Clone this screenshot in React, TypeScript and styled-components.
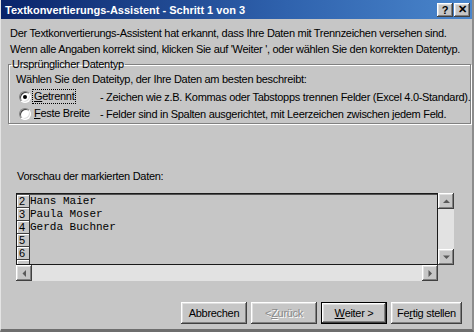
import React from "react";
import styled, { createGlobalStyle } from "styled-components";

const GlobalStyle = createGlobalStyle`
  html, body {
    margin: 0;
    padding: 0;
    background: #c6c6c6;
  }
  body {
    width: 474px;
    height: 332px;
    overflow: hidden;
    font-family: "Liberation Sans", Arial, sans-serif;
    font-size: 11px;
    letter-spacing: -0.3px;
    white-space: nowrap;
    color: #000;
  }
`;

const bevelOut = `
  box-shadow: inset -1px -1px 0 #404040, inset 1px 1px 0 #ffffff,
    inset -2px -2px 0 #808080, inset 2px 2px 0 #dfdfdf;
`;

const Window = styled.div`
  box-sizing: border-box;
  width: 474px;
  height: 332px;
  display: flex;
  flex-direction: column;
  background: #c6c6c6;
  border-left: 1px solid #e4e4e4;
  border-right: 2px solid #8c8c8c;
  border-bottom: 3px solid #6e6e6e;
`;

const TitleBar = styled.div`
  height: 19px;
  flex: none;
  display: flex;
  align-items: center;
  justify-content: space-between;
  padding: 0 2px 0 4px;
  background: linear-gradient(90deg, #0a246a 0%, #2f62ad 60%, #4a86cc 100%);
`;

const Title = styled.span`
  color: #fff;
  font-weight: bold;
  font-size: 11px;
  letter-spacing: 0;
`;

const CapButtons = styled.div`
  display: flex;
  gap: 1px;
`;

const CapButton = styled.div`
  width: 16px;
  height: 14px;
  display: flex;
  align-items: center;
  justify-content: center;
  background: #c6c6c6;
  font-weight: bold;
  font-size: 11px;
  ${bevelOut}
`;

const Body = styled.div`
  flex: 1;
  display: flex;
  flex-direction: column;
  padding: 6px 3px 4px 7px;
`;

const Intro = styled.div`
  line-height: 16px;
  margin-left: 2px;
`;

const GroupBox = styled.fieldset`
  margin: 1px 0 0 0;
  padding: 0 0 1px 2px;
  border: 1px solid #808080;
  box-shadow: 1px 1px 0 #fff, inset 1px 1px 0 #fff;
`;

const Legend = styled.legend`
  padding: 0 1px;
  line-height: 13px;
`;

const GroupContent = styled.div`
  padding: 1px 0 0 5px;
`;

const Prompt = styled.div`
  line-height: 15px;
`;

const OptionGrid = styled.div`
  display: grid;
  grid-template-columns: 81px 1fr;
  grid-auto-rows: 17px;
  align-items: center;
  margin-top: 1px;
  padding-left: 3px;
`;

const OptionLabel = styled.div`
  display: flex;
  align-items: center;
  gap: 2px;
`;

const Radio = styled.span<{ checked?: boolean }>`
  position: relative;
  box-sizing: border-box;
  width: 12px;
  height: 12px;
  border-radius: 50%;
  border: 1px solid;
  border-color: #808080 #ffffff #ffffff #808080;
  background: #fff;
  box-shadow: inset 1px 1px 0 #404040, inset -1px -1px 0 #dfdfdf;
  &::after {
    content: "";
    display: ${(p) => (p.checked ? "block" : "none")};
    position: absolute;
    left: 3px;
    top: 3px;
    width: 4px;
    height: 4px;
    border-radius: 50%;
    background: #000;
  }
`;

const OptionText = styled.span<{ focused?: boolean }>`
  padding: 0 1px;
  line-height: 13px;
  outline: ${(p) => (p.focused ? "1px dotted #000" : "none")};
`;

const Key = styled.span`
  text-decoration: underline;
`;

const PreviewLabel = styled.div`
  margin: 45px 0 0 9px;
  line-height: 14px;
`;

const Preview = styled.div`
  display: grid;
  grid-template-columns: 422px 16px;
  grid-template-rows: 72px 16px;
  margin: 10px 0 0 8px;
`;

const DataFrame = styled.div`
  box-sizing: border-box;
  border: 1px solid #1a1a1a;
  box-shadow: inset 1px 1px 0 #505050;
  overflow: hidden;
  display: grid;
  grid-template-columns: 13px 1fr;
  grid-auto-rows: 13px;
  padding: 1px 0 0 0;
`;

const RowHead = styled.div`
  box-sizing: border-box;
  padding-left: 2px;
  line-height: 12px;
  background: #c6c6c6;
  border-bottom: 1px solid #404040;
  border-right: 1px solid #303030;
  box-shadow: inset 1px 1px 0 #fff;
`;

const RowData = styled.div`
  font-family: "Liberation Mono", "Courier New", monospace;
  font-size: 11px;
  letter-spacing: 0;
  line-height: 13px;
  white-space: pre;
`;

const VScroll = styled.div`
  display: flex;
  flex-direction: column;
  background: #e2e2e2;
`;

const HScroll = styled.div`
  display: flex;
  background: #e2e2e2;
`;

const Track = styled.div`
  flex: 1;
`;

const ScrollButton = styled.div`
  box-sizing: border-box;
  width: 16px;
  height: 16px;
  flex: none;
  display: flex;
  align-items: center;
  justify-content: center;
  background: #c6c6c6;
  ${bevelOut}
`;

const Corner = styled.div`
  background: #c6c6c6;
`;

const ButtonRow = styled.div`
  margin-top: auto;
  display: flex;
  justify-content: flex-end;
  gap: 4px;
  padding-right: 7px;
  padding-bottom: 1px;
`;

const Button = styled.div<{ width?: number; isDefault?: boolean; disabled?: boolean }>`
  box-sizing: border-box;
  width: ${(p) => p.width ?? 66}px;
  height: 22px;
  display: flex;
  align-items: center;
  justify-content: center;
  background: #c6c6c6;
  border: ${(p) => (p.isDefault ? "1px solid #000" : "none")};
  color: ${(p) => (p.disabled ? "#8a8a8a" : "#000")};
  text-shadow: ${(p) => (p.disabled ? "1px 1px 0 #fff" : "none")};
  ${bevelOut}
`;

type Dir = "up" | "down" | "left" | "right";

const Arrow: React.FC<{ dir: Dir }> = ({ dir }) => {
  const pts: Record<Dir, string> = {
    up: "0,4 7,4 3.5,0.5",
    down: "0,0.5 7,0.5 3.5,4",
    left: "4,0 4,7 0.5,3.5",
    right: "0.5,0 0.5,7 4,3.5",
  };
  const vertical = dir === "up" || dir === "down";
  return (
    <svg width={vertical ? 7 : 4} height={vertical ? 4 : 7} viewBox={vertical ? "0 0 7 4" : "0 0 4 7"}>
      <polygon points={pts[dir]} fill="#5a5a5a" />
    </svg>
  );
};

const rows = [
  { n: "2", text: "Hans Maier" },
  { n: "3", text: "Paula Moser" },
  { n: "4", text: "Gerda Buchner" },
  { n: "5", text: "" },
  { n: "6", text: "" },
  { n: "", text: "" },
];

export default function App() {
  return (
    <>
      <GlobalStyle />
      <Window>
        <TitleBar>
          <Title>Textkonvertierungs-Assistent - Schritt 1 von 3</Title>
          <CapButtons>
            <CapButton>?</CapButton>
            <CapButton>✕</CapButton>
          </CapButtons>
        </TitleBar>
        <Body>
          <Intro>
            Der Textkonvertierungs-Assistent hat erkannt, dass Ihre Daten mit Trennzeichen versehen sind.
            <br />
            Wenn alle Angaben korrekt sind, klicken Sie auf 'Weiter ', oder wählen Sie den korrekten Datentyp.
          </Intro>
          <GroupBox>
            <Legend>Ursprünglicher Datentyp</Legend>
            <GroupContent>
              <Prompt>Wählen Sie den Dateityp, der Ihre Daten am besten beschreibt:</Prompt>
              <OptionGrid>
                <OptionLabel>
                  <Radio checked />
                  <OptionText focused>
                    <Key>G</Key>etrennt
                  </OptionText>
                </OptionLabel>
                <span>- Zeichen wie z.B. Kommas oder Tabstopps trennen Felder (Excel 4.0-Standard).</span>
                <OptionLabel>
                  <Radio />
                  <OptionText>
                    <Key>F</Key>este Breite
                  </OptionText>
                </OptionLabel>
                <span>- Felder sind in Spalten ausgerichtet, mit Leerzeichen zwischen jedem Feld.</span>
              </OptionGrid>
            </GroupContent>
          </GroupBox>
          <PreviewLabel>Vorschau der markierten Daten:</PreviewLabel>
          <Preview>
            <DataFrame>
              {rows.map((r, i) => (
                <React.Fragment key={i}>
                  <RowHead>{r.n}</RowHead>
                  <RowData>{r.text}</RowData>
                </React.Fragment>
              ))}
            </DataFrame>
            <VScroll>
              <ScrollButton>
                <Arrow dir="up" />
              </ScrollButton>
              <Track />
              <ScrollButton>
                <Arrow dir="down" />
              </ScrollButton>
            </VScroll>
            <HScroll>
              <ScrollButton>
                <Arrow dir="left" />
              </ScrollButton>
              <Track />
              <ScrollButton>
                <Arrow dir="right" />
              </ScrollButton>
            </HScroll>
            <Corner />
          </Preview>
          <ButtonRow>
            <Button>Abbrechen</Button>
            <Button disabled>
              &lt; <Key>Z</Key>urück
            </Button>
            <Button isDefault>
              <Key>W</Key>eiter &gt;
            </Button>
            <Button width={71}>
              Fe<Key>r</Key>tig stellen
            </Button>
          </ButtonRow>
        </Body>
      </Window>
    </>
  );
}
